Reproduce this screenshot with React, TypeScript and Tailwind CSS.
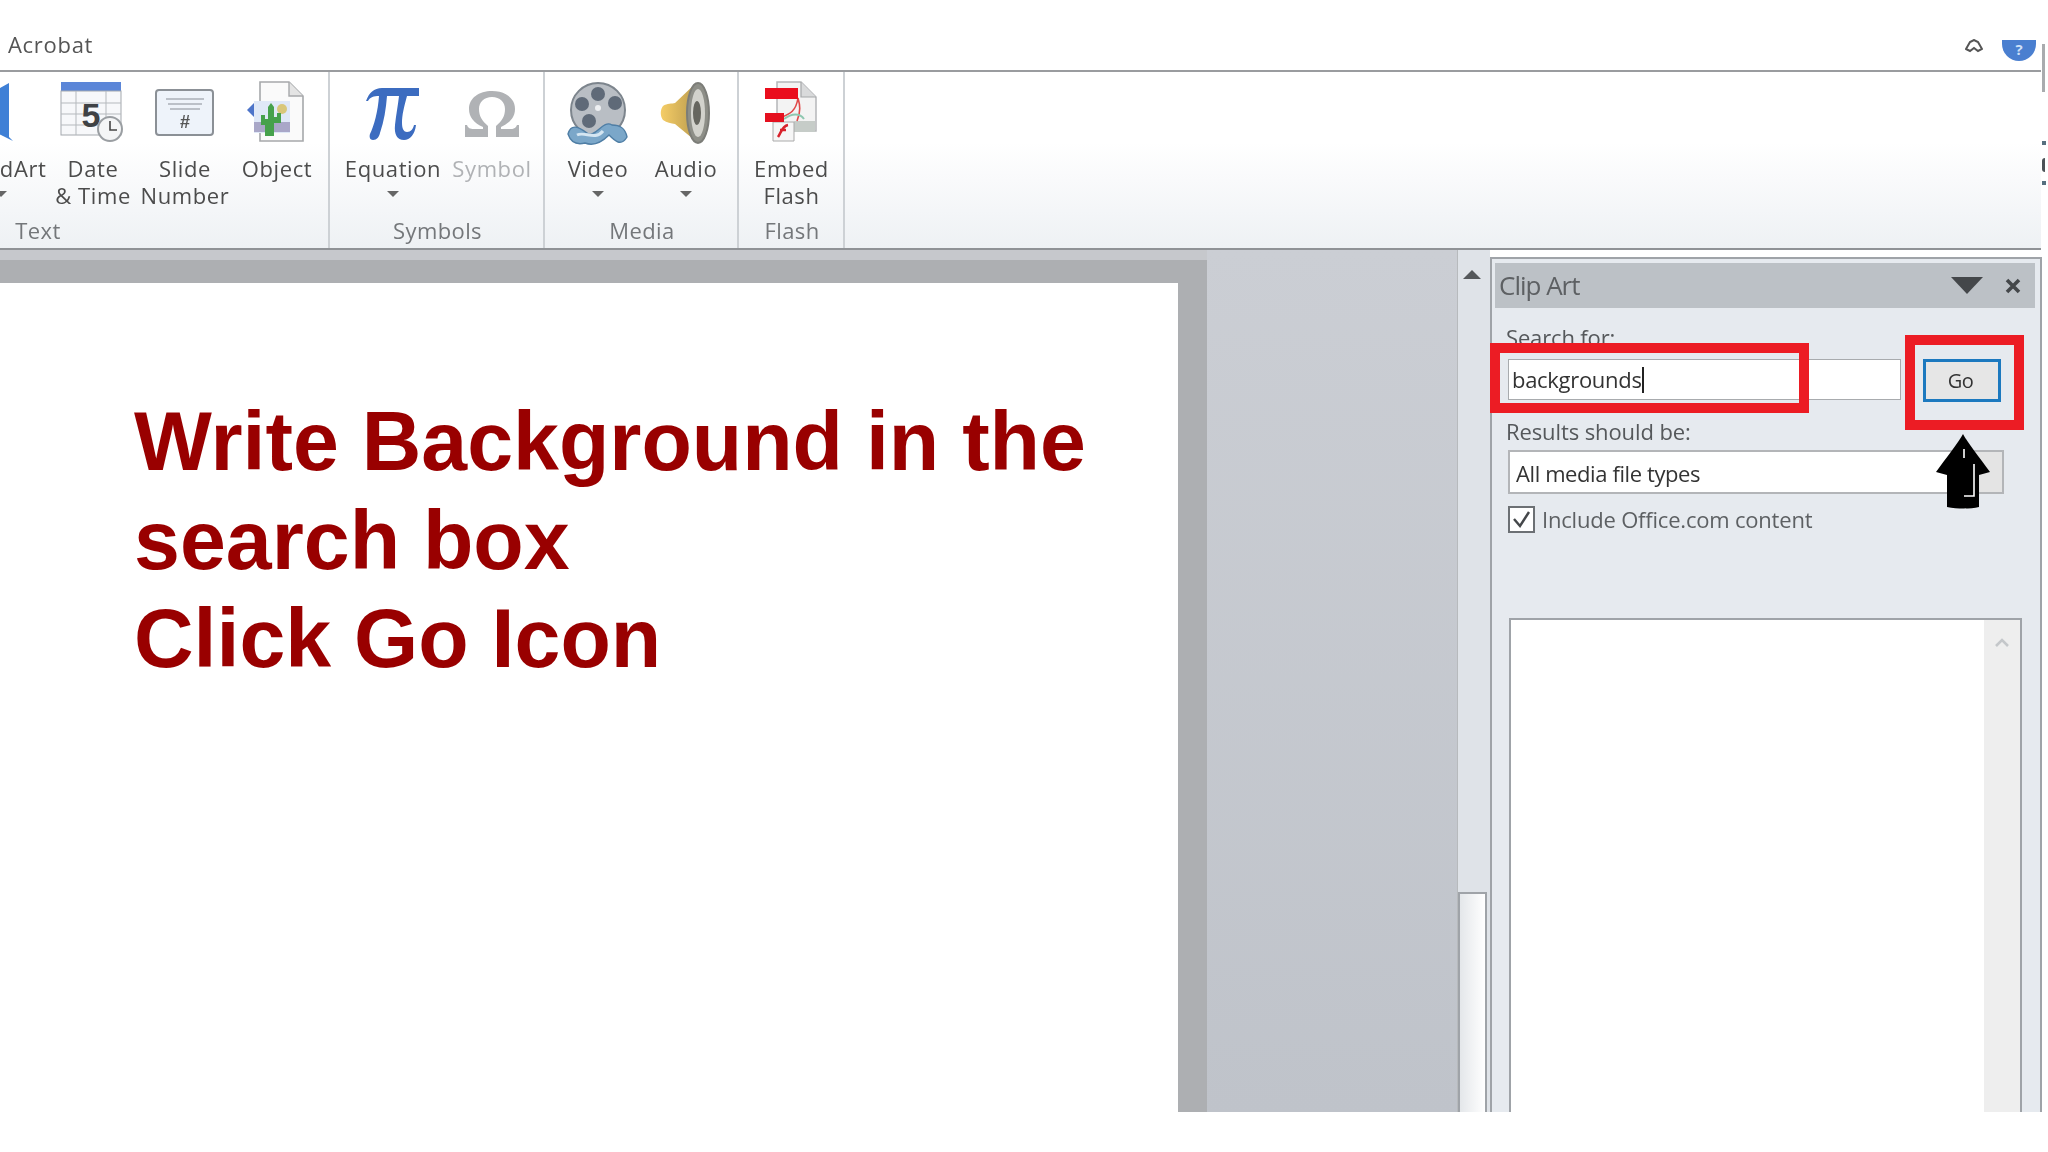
import type { ReactNode } from 'react'

const uiFont = "font-['Open_Sans',sans-serif]"

function DateTimeIcon() {
  return (
    <svg width="64" height="66" viewBox="0 0 64 66" className="-ml-[2px]">
      <rect x="1" y="1" width="60" height="9" fill="#5b86d8" />
      <rect x="1" y="10" width="60" height="44" fill="#f7f8fa" stroke="#a3a8ad" />
      <path d="M1 22H61M1 33H61M1 44H61M16 10V54M46 10V54" stroke="#b5b9bd" strokeWidth="1" />
      <text x="31" y="46" textAnchor="middle" fontFamily="Liberation Sans" fontWeight="700" fontSize="34" fill="#3f4245">5</text>
      <circle cx="50" cy="48" r="12" fill="#f4f5f6" stroke="#9a9ea2" strokeWidth="2" />
      <path d="M50 40V49H57" fill="none" stroke="#444" strokeWidth="1.6" />
    </svg>
  )
}

function SlideNumberIcon() {
  return (
    <svg width="60" height="50" viewBox="0 0 60 50">
      <rect x="1" y="1" width="57" height="45" rx="3" fill="#eef3fa" stroke="#8b9096" strokeWidth="2" />
      <path d="M11 10H49M13 15H47M15 20H45" stroke="#aab0b8" strokeWidth="1.4" />
      <text x="30" y="39" textAnchor="middle" fontFamily="Liberation Sans" fontWeight="700" fontSize="18" fill="#555">#</text>
    </svg>
  )
}

function ObjectIcon() {
  return (
    <svg width="60" height="66" viewBox="0 0 60 66">
      <path d="M13 1H42L56 15V60H13Z" fill="#fafafa" stroke="#a6a8ab" strokeWidth="1.6" />
      <path d="M42 1V15H56" fill="#e4e4e4" stroke="#a6a8ab" strokeWidth="1.4" />
      <rect x="7" y="20" width="36" height="32" fill="#dfe8f7" />
      <rect x="7" y="41" width="36" height="10" fill="#a9a7c8" />
      <path d="M0 29L7 22V36Z" fill="#4d74c9" />
      <circle cx="35" cy="28" r="5" fill="#d9c77a" />
      <path d="M18 55V44H14V34H18V38H21V26L24 22L27 26V36H30V32H34V42H27V55Z" fill="#46a14c" />
    </svg>
  )
}

function PiIcon() {
  return (
    <svg width="54" height="54" viewBox="0 0 54 54">
      <path
        d="M0 14C3 6 8 1 16 1L53 1L53 9L41 9C38 20 36 28 36 36C36 42 38 45 41 45C45 45 47 42 48 38L50 38C49 47 44 53 38 53C31 53 28 47 29 38C30 28 32 18 33 9L21 9C20 22 18 34 14 46C13 50 11 53 7 53C4 53 3 50 4 47C8 39 12 24 13 9C8 9 4 10 2 14Z"
        fill="#3c6cc0"
      />
    </svg>
  )
}

function OmegaIcon() {
  return (
    <svg width="56" height="48" viewBox="0 0 56 48">
      <path
        d="M1 47V35H3C4 38 6 39 10 39H19V37C10 33 5 27 5 19C5 8 15 1 28 1C41 1 51 8 51 19C51 27 46 33 37 37V39H46C50 39 52 38 53 35H55V47H32V36C38 31 41 26 41 19C41 12 36 7 28 7C20 7 15 12 15 19C15 26 18 31 24 36V47Z"
        fill="#b0b2b5"
      />
    </svg>
  )
}

function FilmIcon() {
  return (
    <svg width="64" height="66" viewBox="0 0 64 66" className="-ml-[2px]">
      <circle cx="33" cy="29" r="27" fill="#b9bec4" stroke="#7d858d" strokeWidth="2" />
      <circle cx="33" cy="13" r="7" fill="#5f6a78" />
      <circle cx="17" cy="23" r="7" fill="#5f6a78" />
      <circle cx="50" cy="22" r="7" fill="#5f6a78" />
      <circle cx="24" cy="40" r="7" fill="#5f6a78" />
      <circle cx="33" cy="27" r="3" fill="#eef0f2" />
      <path d="M3 53C6 42 14 46 22 52C30 58 38 38 47 44C54 44 60 46 62 56C56 66 50 60 44 54C38 60 30 66 20 62C12 64 6 62 3 53Z" fill="#7ba7c9" stroke="#4f7ea5" strokeWidth="1.4" />
      <path d="M12 54C20 50 30 60 38 50" fill="none" stroke="#d5e6f2" strokeWidth="3" />
    </svg>
  )
}

function SpeakerIcon() {
  return (
    <svg width="52" height="66" viewBox="0 0 52 66">
      <defs>
        <linearGradient id="gold" x1="0" y1="0" x2="1" y2="0">
          <stop offset="0" stopColor="#f5cd66" />
          <stop offset="1" stopColor="#b99a4e" />
        </linearGradient>
      </defs>
      <path d="M3 25C7 22 12 23 15 22L36 2L38 62L15 43C11 42 7 42 3 39C0 35 0 29 3 25Z" fill="url(#gold)" />
      <ellipse cx="38" cy="32" rx="11" ry="30" fill="#8e8f88" stroke="#7c7d78" strokeWidth="2" />
      <ellipse cx="38" cy="32" rx="7" ry="24" fill="#d2d2cc" />
      <ellipse cx="37" cy="32" rx="4" ry="12" fill="#66665f" />
    </svg>
  )
}

function FlashIcon() {
  return (
    <svg width="56" height="66" viewBox="0 0 56 66">
      <path d="M13 1H37L52 16V50H13Z" fill="#f3f3f3" stroke="#b5b7b9" strokeWidth="1.5" />
      <path d="M37 1V16H52" fill="#d9dadb" stroke="#a5a7a9" strokeWidth="1.2" />
      <rect x="30" y="40" width="21" height="11" fill="#c6ccc8" />
      <path d="M33 40C37 30 36 24 34 17C32 30 26 33 18 36" fill="none" stroke="#e04848" strokeWidth="1.6" />
      <path d="M40 38C36 32 28 32 20 38" fill="none" stroke="#8ec7b0" strokeWidth="2" />
      <rect x="1" y="7" width="33" height="11" fill="#ea0d1d" />
      <path d="M9 41H30V60H9Z" fill="#f6f6f6" stroke="#aaa" />
      <rect x="1" y="32" width="19" height="9" fill="#e5101f" />
      <path d="M24 44C18 45 17 52 14 56M16 49H22" fill="none" stroke="#d8222c" strokeWidth="2.6" />
    </svg>
  )
}

function WordArtIcon() {
  return (
    <svg width="56" height="66" viewBox="0 0 56 66">
      <path d="M10 22L46 2V56L50 60L38 54L10 42Z" fill="#3f80d6" />
    </svg>
  )
}

function RibbonItem({ width, icon, lines, arrow, muted }: { width: string; icon: ReactNode; lines: string[]; arrow?: boolean; muted?: boolean }) {
  return (
    <div className={`${width} shrink-0 flex flex-col items-center`}>
      <div className="h-[83px] w-full flex items-center justify-center">{icon}</div>
      <div className={`text-[22px] leading-[27px] whitespace-nowrap text-center tracking-[0.6px] ${muted ? 'text-[#b0b2b5]' : 'text-[#4c4c4c]'}`}>
        {lines.map((line) => (
          <div key={line}>{line}</div>
        ))}
      </div>
      {arrow && <div className="mt-[9px] w-0 h-0 border-x-[6px] border-x-transparent border-t-[6px] border-t-[#666]" />}
    </div>
  )
}

function RibbonGroup({ className, label, children }: { className: string; label: string; children: ReactNode }) {
  return (
    <div className={`${className} shrink-0 h-full flex flex-col border-r-2 border-[#cdd1d5]`}>
      <div className="flex-1 flex">{children}</div>
      <div className="h-[33px] pl-[2px] text-center text-[22px] leading-[30px] tracking-[0.4px] text-[#74777a]">{label}</div>
    </div>
  )
}

function Ribbon() {
  return (
    <div className="h-[178px] w-[2041px] flex bg-gradient-to-b from-white from-40% to-[#eef1f4] border-b-2 border-[#8f9296] blur-[0.5px]">
      <RibbonGroup className="w-[584px] ml-[-254px]" label="Text">
        <div className="w-full flex justify-end pr-[5px]">
          <RibbonItem width="w-[92px]" icon={<span className="-ml-[20px]"><WordArtIcon /></span>} lines={['WordArt']} arrow />
          <RibbonItem width="w-[92px]" icon={<DateTimeIcon />} lines={['Date', '& Time']} />
          <RibbonItem width="w-[92px]" icon={<SlideNumberIcon />} lines={['Slide', 'Number']} />
          <RibbonItem width="w-[92px]" icon={<ObjectIcon />} lines={['Object']} />
        </div>
      </RibbonGroup>
      <RibbonGroup className="w-[215px]" label="Symbols">
        <div className="flex pl-[10px]">
          <RibbonItem width="w-[106px]" icon={<PiIcon />} lines={['Equation']} arrow />
          <RibbonItem width="w-[92px]" icon={<OmegaIcon />} lines={['Symbol']} muted />
        </div>
      </RibbonGroup>
      <RibbonGroup className="w-[194px]" label="Media">
        <div className="flex pl-[9px]">
          <RibbonItem width="w-[88px]" icon={<FilmIcon />} lines={['Video']} arrow />
          <RibbonItem width="w-[88px]" icon={<SpeakerIcon />} lines={['Audio']} arrow />
        </div>
      </RibbonGroup>
      <RibbonGroup className="w-[106px]" label="Flash">
        <div className="w-full flex justify-center pl-[1px]">
          <RibbonItem width="w-[100px]" icon={<FlashIcon />} lines={['Embed', 'Flash']} />
        </div>
      </RibbonGroup>
    </div>
  )
}

function ClipArtPanel() {
  return (
    <div className="relative w-[552px] mt-[7px] border-l-2 border-t-2 border-r-2 border-[#9fa3a8] bg-[#e6eaef] flex flex-col blur-[0.5px]">
      <div className="mt-[4px] ml-[3px] mr-[5px] h-[45px] shrink-0 bg-[#bcc1c6] flex items-center justify-between pl-[4px] pr-[13px]">
        <span className="text-[26px] tracking-[-1px] text-[#5d6063]">Clip Art</span>
        <div className="flex items-center gap-[21px]">
          <div className="w-0 h-0 border-x-[16px] border-x-transparent border-t-[17px] border-t-[#44474a]" />
          <svg width="18" height="18" viewBox="0 0 18 18"><path d="M3 3L15 15M15 3L3 15" stroke="#44474a" strokeWidth="3.6" /></svg>
        </div>
      </div>
      <div className="pl-[14px] text-[22px] leading-[28px] tracking-[-0.15px] text-[#55585b] mt-[15px]">Search for:</div>
      <div className="flex items-start mt-[8px] pl-[16px]">
        <div className="w-[393px] h-[41px] bg-white border border-[#a8abae] flex items-center pl-[3px] text-[22px] tracking-[-0.3px] text-[#333]">
          backgrounds<span className="w-[2px] h-[26px] bg-[#222]" />
        </div>
        <div className="ml-[22px] w-[78px] h-[43px] bg-[#e6e6e6] border-[3px] border-[#1c79bf] flex items-center justify-center pr-[3px] text-[20px] tracking-[-0.5px] text-[#333]">Go</div>
      </div>
      <div className="pl-[14px] text-[22px] leading-[28px] tracking-[-0.1px] text-[#55585b] mt-[15px]">Results should be:</div>
      <div className="mt-[5px] ml-[16px] w-[496px] h-[44px] bg-white border-2 border-[#b3b5b8] flex items-center justify-between text-[22px] tracking-[-0.4px] text-[#333] pl-[6px]">
        <span className="pt-[2px]">All media file types</span>
        <div className="w-[44px] h-full bg-[#e4e4e4]" />
      </div>
      <div className="mt-[9px] ml-[16px] flex items-center gap-[7px]">
        <div className="w-[27px] h-[27px] bg-white border-2 border-[#6c7074] flex items-center justify-center">
          <svg width="21" height="21" viewBox="0 0 21 21"><path d="M3 10L9 17L18 3" fill="none" stroke="#44474a" strokeWidth="2.4" /></svg>
        </div>
        <span className="text-[22px] tracking-[-0.2px] text-[#5d6063]">Include Office.com content</span>
      </div>
      <div className="mt-[82px] ml-[17px] mr-[18px] flex-1 flex border-l-2 border-t-2 border-r-2 border-[#9fa3a8] bg-white">
        <div className="flex-1" />
        <div className="w-[36px] bg-[#eeeeee] flex justify-center pt-[18px]">
          <svg width="16" height="10" viewBox="0 0 16 10"><path d="M2 8L8 2L14 8" fill="none" stroke="#c4c7ca" strokeWidth="2.6" /></svg>
        </div>
      </div>

      {/* callouts drawn on top of the panel */}
      <div className="absolute left-[-2px] top-[84px] w-[319px] h-[70px] border-[10px] border-[#ec1c24]" />
      <div className="absolute left-[413px] top-[76px] w-[119px] h-[95px] border-[10px] border-[#ec1c24]" />
      <svg className="absolute left-[444px] top-[175px]" width="54" height="75" viewBox="0 0 54 75">
        <path d="M27 0C31 8 44 24 54 38L43 41V73C34 75 22 75 11 73V41L0 38C10 24 23 8 27 0Z" fill="#000" />
        <path d="M28 15V24M38 30V62H28" fill="none" stroke="#fff" strokeWidth="1.6" />
      </svg>
    </div>
  )
}

export default function App() {
  return (
    <div className={`${uiFont} relative w-[2048px] h-[1152px] overflow-hidden bg-white`}>
      <div className="h-[70px] relative flex items-end">
        <span className="pl-[8px] pb-[9px] text-[22px] tracking-[0.7px] text-[#555] blur-[0.5px]">Acrobat</span>
        <svg className="absolute left-[1965px] top-[39px]" width="18" height="14" viewBox="0 0 18 14">
          <path d="M1 10L5 12L9 9L13 12L17 10L13 3L9 1L5 3Z" fill="none" stroke="#555" strokeWidth="2" />
        </svg>
        <div className="absolute left-[2002px] top-[40px] w-[34px] h-[21px] rounded-b-[17px] bg-[#4a7fd0] flex justify-center text-[#cfe0f7] font-bold text-[15px] leading-[19px]">?</div>
      </div>
      <div className="h-[2px] w-[2041px] bg-[#9a9c9f]" />
      <Ribbon />

      <div className="h-[862px] flex">
        <div className="w-[1207px] shrink-0 flex flex-col bg-[#c6c8cc]">
          <div className="h-[10px] shrink-0" />
          <div className="flex-1 bg-[#adafb2] pt-[23px] flex flex-col">
            <div className="w-[1178px] flex-1 bg-white pl-[134px] pt-[109px]">
              <p className="font-['Liberation_Sans',sans-serif] font-bold text-[82.5px] leading-[98.5px] text-[#990000] whitespace-nowrap">
                Write Background in the<br />search box<br />Click Go Icon
              </p>
            </div>
          </div>
        </div>
        <div className="w-[250px] shrink-0 bg-gradient-to-b from-[#cbced4] to-[#bfc3ca]" />
        <div className="w-[33px] shrink-0 relative bg-[#dfe3e8] flex flex-col items-center border-l border-[#b7babd]">
          <div className="mt-[20px] -ml-[4px] w-0 h-0 border-x-[9px] border-x-transparent border-b-[9px] border-b-[#55585b]" />
          <div className="mt-[613px] self-start w-[29px] flex-1 border-x-2 border-t-2 border-[#9fa3a8] bg-gradient-to-r from-[#e4e7ea] to-white" />
        </div>
        <ClipArtPanel />
      </div>

      {/* window edge at the far right */}
      <div className="absolute left-[2042px] top-[44px] w-[3px] h-[48px] bg-[#a9abae]" />
      <div className="absolute left-[2042px] top-[141px] w-[4px] h-[4px] bg-[#56707f]" />
      <div className="absolute left-[2042px] top-[158px] w-[3px] h-[14px] rounded-l bg-[#4c5257]" />
      <div className="absolute left-[2042px] top-[181px] w-[4px] h-[4px] bg-[#56707f]" />
    </div>
  )
}
